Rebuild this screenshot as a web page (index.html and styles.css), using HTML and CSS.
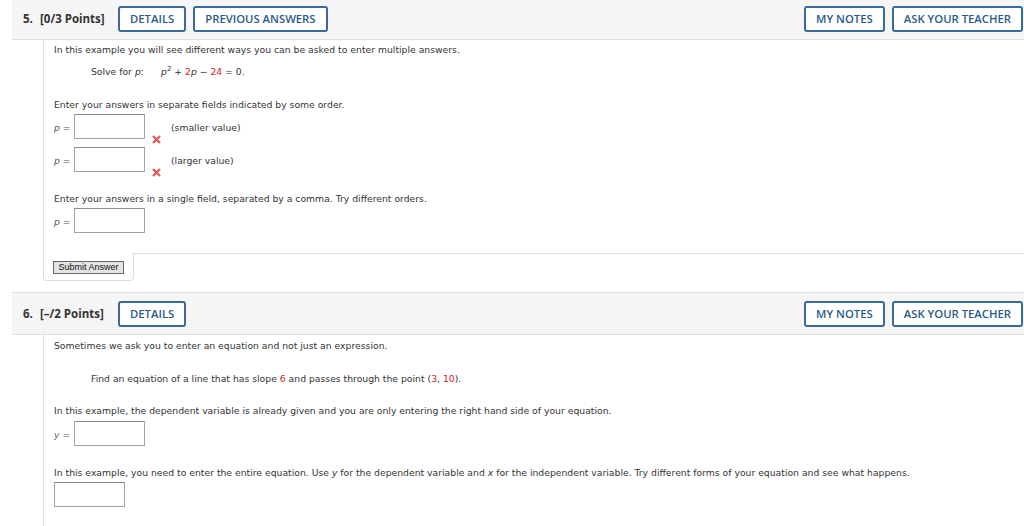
FILE: index.html
```html
<!DOCTYPE html>
<html>
<head>
<meta charset="utf-8">
<link rel="stylesheet" href="styles.css">
</head>
<body>
<div class="page">
  <section class="question q5">
    <div class="qhead">
      <div class="qnum"><span class="num">5.</span><span class="pts">[0/3 Points]</span></div>
      <button class="btn">DETAILS</button>
      <button class="btn">PREVIOUS ANSWERS</button>
      <div class="spacer"></div>
      <button class="btn">MY NOTES</button>
      <button class="btn">ASK YOUR TEACHER</button>
    </div>
    <div class="qbody">
      <p class="intro">In this example you will see different ways you can be asked to enter multiple answers.</p>
      <p class="indent solve"><span class="solve-label">Solve for <i>p</i>:</span><span class="eq"><i>p</i><sup>2</sup> + <span class="red">2</span><i>p</i> &minus; <span class="red">24</span> = 0.</span></p>
      <p class="gap19">Enter your answers in separate fields indicated by some order.</p>
      <div class="arow first">
        <span class="lbl"><i>p</i> =</span>
        <span class="inp"></span>
        <svg class="xmark" width="9" height="9" viewBox="0 0 9 9"><path d="M1 1L8 8M8 1L1 8" stroke="#e35d5d" stroke-width="2.4" fill="none"/></svg>
        <span class="note">(smaller value)</span>
      </div>
      <div class="arow">
        <span class="lbl"><i>p</i> =</span>
        <span class="inp"></span>
        <svg class="xmark" width="9" height="9" viewBox="0 0 9 9"><path d="M1 1L8 8M8 1L1 8" stroke="#e35d5d" stroke-width="2.4" fill="none"/></svg>
        <span class="note">(larger value)</span>
      </div>
      <p class="gap12">Enter your answers in a single field, separated by a comma. Try different orders.</p>
      <div class="arow single">
        <span class="lbl"><i>p</i> =</span>
        <span class="inp"></span>
      </div>
    </div>
    <div class="qfoot">
      <div class="tab"><button class="submit">Submit Answer</button></div>
      <div class="rest"></div>
    </div>
  </section>

  <section class="question q6">
    <div class="qhead">
      <div class="qnum"><span class="num">6.</span><span class="pts">[&ndash;/2 Points]</span></div>
      <button class="btn">DETAILS</button>
      <div class="spacer"></div>
      <button class="btn">MY NOTES</button>
      <button class="btn">ASK YOUR TEACHER</button>
    </div>
    <div class="qbody open">
      <p>Sometimes we ask you to enter an equation and not just an expression.</p>
      <p class="indent gap19">Find an equation of a line that has slope <span class="red">6</span> and passes through the point (<span class="red">3</span>, <span class="red">10</span>).</p>
      <p class="gap18">In this example, the dependent variable is already given and you are only entering the right hand side of your equation.</p>
      <div class="arow yrow">
        <span class="lbl light"><i>y</i> =</span>
        <span class="inp"></span>
      </div>
      <p class="gap16">In this example, you need to enter the entire equation. Use <i>y</i> for the dependent variable and <i>x</i> for the independent variable. Try different forms of your equation and see what happens.</p>
      <div class="arow eqrow">
        <span class="inp"></span>
      </div>
    </div>
  </section>
</div>
</body>
</html>
```
FILE: styles.css
```css
html, body {
  margin: 0;
  padding: 0;
  background: #fff;
}
body {
  font-family: "DejaVu Sans", Verdana, sans-serif;
  font-size: 9.25px;
  color: #333;
  overflow: hidden;
}
.page {
  margin-top: -3px;
}
p {
  margin: 0;
  line-height: 14px;
}
.qhead {
  margin-left: 12px;
  height: 41px;
  background: #f5f5f5;
  border-top: 1px solid #e0e0e0;
  border-bottom: 1px solid #e0e0e0;
  display: flex;
  align-items: center;
  padding: 0 1px 0 11px;
  font-family: "Open Sans", sans-serif;
}
.qnum {
  font-weight: 700;
  font-size: 11.5px;
  color: #333;
  width: 95px;
  display: flex;
}
.qnum .num {
  width: 17px;
}
.btn {
  font-family: "Open Sans", sans-serif;
  font-weight: 600;
  font-size: 11.3px;
  color: #2b5a88;
  background: #fff;
  border: 2px solid #3a6a9a;
  border-radius: 3px;
  height: 26px;
  padding: 0 10px;
  margin-right: 7px;
  line-height: 22px;
}
.btn:last-child {
  margin-right: 0;
}
.spacer {
  flex: 1;
}
.qbody {
  margin-left: 43px;
  border-left: 1px solid #ddd;
  padding-left: 10px;
  padding-top: 3px;
  height: 213px;
  box-sizing: border-box;
}
.indent {
  padding-left: 37px;
}
.solve {
  margin-top: 8px;
  display: flex;
}
.solve-label {
  width: 70px;
}
.solve sup {
  font-size: 7px;
  line-height: 0;
  vertical-align: 4px;
}
.red {
  color: #d6211f;
}
.gap19 {
  margin-top: 19px;
}
.gap18 {
  margin-top: 18px;
}
.gap16 {
  margin-top: 16px;
}
.gap12 {
  margin-top: 12px;
}
.arow {
  display: flex;
  align-items: flex-start;
  height: 33px;
}
.arow.first {
  margin-top: 2px;
}
.arow.single {
  margin-top: 2px;
}
.arow.yrow {
  margin-top: 3px;
  height: 29px;
}
.arow.eqrow {
  margin-top: 2px;
  height: 25px;
}
.lbl {
  width: 20px;
  line-height: 27px;
  white-space: nowrap;
  color: #555;
}
.lbl.light {
  color: #666;
}
.inp {
  width: 71px;
  height: 25px;
  box-sizing: border-box;
  border: 1px solid #a3a3a3;
  border-top-color: #8c8c8c;
  background: #fff;
}
.xmark {
  margin-top: 21px;
  margin-left: 7px;
}
.note {
  margin-left: 10px;
  margin-top: 7px;
  line-height: 14px;
}
.qfoot {
  display: flex;
  margin-left: 43px;
  margin-bottom: 11px;
}
.tab {
  width: 91px;
  box-sizing: border-box;
  border: 1px solid #ddd;
  border-top: none;
  border-radius: 0 0 4px 4px;
  padding: 8px 0 6px 9px;
  height: 28px;
}
.submit {
  display: block;
  font-family: "Liberation Sans", Arial, sans-serif;
  font-size: 9px;
  color: #111;
  background: #e4e4e4;
  border: 1px solid #666;
  border-radius: 0;
  height: 13px;
  width: 71px;
  padding: 0;
  line-height: 11px;
}
.rest {
  flex: 1;
  border-top: 1px solid #ddd;
}
.qbody.open {
  height: 191px;
  padding-top: 4px;
}
```
